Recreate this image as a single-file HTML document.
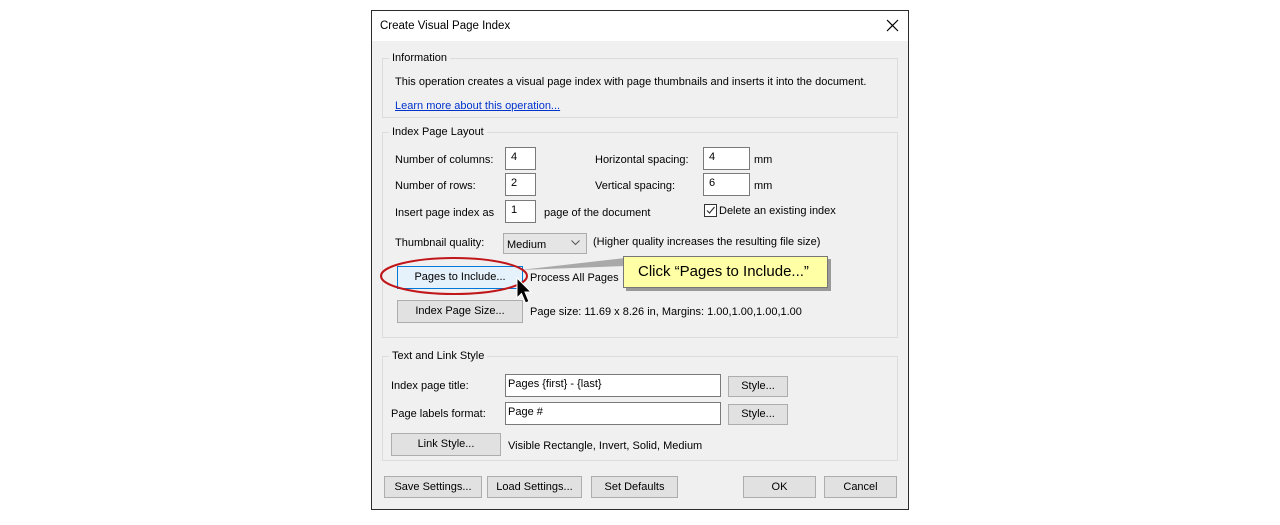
<!DOCTYPE html>
<html><head><meta charset="utf-8"><style>
*{box-sizing:border-box;margin:0;padding:0}
body{width:1280px;height:525px;background:#fff;position:relative;overflow:hidden;font-family:"Liberation Sans",sans-serif;font-size:11px;color:#000}
.a{position:absolute;white-space:nowrap}
.dlg{position:absolute;left:371px;top:10px;width:538px;height:500px;border:1px solid #2b2b2b;background:#f0f0f0}
.tb{position:absolute;left:0;top:0;width:536px;height:30px;background:#fff}
.grp{position:absolute;border:1px solid #dcdcdc}
.gl{position:absolute;background:#f0f0f0;padding:0 3px;top:-7px;left:6px}
.in{position:absolute;background:#fff;border:1px solid #7a7a7a;padding:3px 0 0 5px}
.btn{position:absolute;background:#e1e1e1;border:1px solid #adadad;text-align:center;line-height:21px}
</style></head><body>
<div class="dlg">
 <div class="tb"><span class="a" style="left:8px;top:9px;font-size:11.5px">Create Visual Page Index</span>
 <svg class="a" style="left:514px;top:8px" width="13" height="13"><path d="M1 1L12 12M12 1L1 12" stroke="#000" stroke-width="1.2"/></svg></div>
</div>
<div class="grp" style="left:382px;top:58px;width:516px;height:60px"><span class="gl">Information</span></div>
<span class="a" style="left:395px;top:76px">This operation creates a visual page index with page thumbnails and inserts it into the document.</span>
<span class="a" style="left:395px;top:100px;color:#0033cc;text-decoration:underline">Learn more about this operation...</span>

<div class="grp" style="left:382px;top:132px;width:516px;height:206px"><span class="gl">Index Page Layout</span></div>
<span class="a" style="left:395px;top:154px">Number of columns:</span>
<div class="in" style="left:505px;top:147px;width:31px;height:23px">4</div>
<span class="a" style="left:395px;top:180px">Number of rows:</span>
<div class="in" style="left:505px;top:173px;width:31px;height:23px">2</div>
<span class="a" style="left:395px;top:207px">Insert page index as</span>
<div class="in" style="left:505px;top:200px;width:31px;height:23px">1</div>
<span class="a" style="left:544px;top:207px">page of the document</span>
<span class="a" style="left:595px;top:154px">Horizontal spacing:</span>
<div class="in" style="left:703px;top:147px;width:47px;height:23px">4</div>
<span class="a" style="left:754px;top:154px">mm</span>
<span class="a" style="left:595px;top:180px">Vertical spacing:</span>
<div class="in" style="left:703px;top:173px;width:47px;height:23px">6</div>
<span class="a" style="left:754px;top:180px">mm</span>
<div class="a" style="left:704px;top:204px;width:13px;height:13px;border:1px solid #333;background:#fff"></div>
<svg class="a" style="left:704px;top:204px" width="13" height="13"><path d="M3 6.5L5.5 9L10.5 3" stroke="#333" stroke-width="1.2" fill="none"/></svg>
<span class="a" style="left:719px;top:205px">Delete an existing index</span>
<span class="a" style="left:395px;top:237px">Thumbnail quality:</span>
<div class="a" style="left:503px;top:233px;width:84px;height:21px;background:#e5e5e5;border:1px solid #acacac;padding:5px 0 0 3px">Medium</div>
<svg class="a" style="left:571px;top:240px" width="9" height="6"><path d="M0.5 0.5L4.5 4.5L8.5 0.5" stroke="#555" fill="none"/></svg>
<span class="a" style="left:593px;top:236px">(Higher quality increases the resulting file size)</span>
<div class="btn" style="left:397px;top:266px;width:126px;height:23px;background:#e5f1fb;border-color:#0078d7">Pages to Include...</div>
<span class="a" style="left:530px;top:272px">Process All Pages</span>
<div class="btn" style="left:397px;top:300px;width:126px;height:23px">Index Page Size...</div>
<span class="a" style="left:530px;top:306px">Page size: 11.69 x 8.26 in, Margins: 1.00,1.00,1.00,1.00</span>
<svg class="a" style="left:0;top:0" width="1280" height="525">
 <polygon points="625,258 520,270 625,266" fill="#a9a9a9"/>
 <ellipse cx="454" cy="276" rx="73" ry="18" fill="none" stroke="#c0161a" stroke-width="2"/>
 <path d="M517 278L517 298L521.5 293.5L525.5 303L529 301.5L525 292L531 292Z" fill="#000" stroke="#fff" stroke-width="1"/>
</svg>
<div class="a" style="left:623px;top:256px;width:205px;height:32px;background:#ffffa5;border:1px solid #777;box-shadow:3px 3px 0 #999;font-size:15px;padding:6px 0 0 14px">Click “Pages to Include...”</div>

<div class="grp" style="left:382px;top:356px;width:516px;height:105px"><span class="gl">Text and Link Style</span></div>
<span class="a" style="left:391px;top:380px">Index page title:</span>
<div class="in" style="left:505px;top:374px;width:216px;height:23px;padding:3px 0 0 2px">Pages {first} - {last}</div>
<div class="btn" style="left:728px;top:376px;width:60px;height:21px;line-height:19px">Style...</div>
<span class="a" style="left:391px;top:408px">Page labels format:</span>
<div class="in" style="left:505px;top:402px;width:216px;height:23px;padding:3px 0 0 2px">Page #</div>
<div class="btn" style="left:728px;top:404px;width:60px;height:21px;line-height:19px">Style...</div>
<div class="btn" style="left:391px;top:433px;width:110px;height:23px">Link Style...</div>
<span class="a" style="left:508px;top:440px">Visible Rectangle, Invert, Solid, Medium</span>

<div class="btn" style="left:384px;top:476px;width:98px;height:22px">Save Settings...</div>
<div class="btn" style="left:487px;top:476px;width:95px;height:22px">Load Settings...</div>
<div class="btn" style="left:591px;top:476px;width:87px;height:22px">Set Defaults</div>
<div class="btn" style="left:743px;top:476px;width:73px;height:22px">OK</div>
<div class="btn" style="left:824px;top:476px;width:73px;height:22px">Cancel</div>
</body></html>
